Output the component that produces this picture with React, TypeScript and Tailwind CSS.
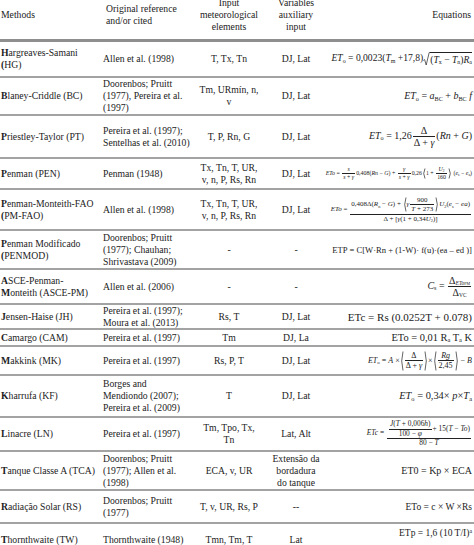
import React from "react";

type N = React.ReactNode;

const I = ({ children }: { children: N }) => <i className="italic">{children}</i>;
const Sb = ({ children }: { children: N }) => <sub className="text-[0.62em]">{children}</sub>;
const Sp = ({ children }: { children: N }) => <sup className="text-[0.62em]">{children}</sup>;

const Frac = ({ n, d }: { n: N; d: N }) => (
  <span className="mx-[1px] inline-flex flex-col items-center align-middle leading-[1.15]">
    <span className="px-[1px]">{n}</span>
    <span className="self-stretch border-t border-[#222] px-[1px] text-center">{d}</span>
  </span>
);

const Paren = ({ right, h }: { right?: boolean; h: number }) => (
  <svg width="4" height={h} viewBox={`0 0 4 ${h}`} className="inline-block align-middle">
    <path
      d={right ? `M1 0.5 Q3.6 ${h / 2} 1 ${h - 0.5}` : `M3 0.5 Q0.4 ${h / 2} 3 ${h - 0.5}`}
      stroke="#222"
      strokeWidth="0.7"
      fill="none"
    />
  </svg>
);

const Sqrt = ({ children }: { children: N }) => (
  <span className="inline-flex items-stretch align-middle">
    <svg width="7" height="14" viewBox="0 0 7 14" className="block">
      <path d="M0.3 8.5 L1.6 7.6 L3.2 13 L6.2 0.5 L7 0.5" stroke="#222" strokeWidth="0.7" fill="none" />
    </svg>
    <span className="border-t border-[#222] leading-[13px]">{children}</span>
  </span>
);

const EqHG = () => (
  <span className="text-[9.6px]">
    <I>ET</I>
    <Sb>o</Sb> = 0,0023(<I>T</I>
    <Sb>m</Sb> +17,8)
    <Sqrt>
      (<I>T</I>
      <Sb>x</Sb> − <I>T</I>
      <Sb>n</Sb>)<I>R</I>
      <Sb>a</Sb>
    </Sqrt>
  </span>
);

const EqBC = () => (
  <span className="text-[10px]">
    <I>ET</I>
    <Sb>o</Sb> = <I>a</I>
    <Sb>BC</Sb> + <I>b</I>
    <Sb>BC</Sb> <I>f</I>
  </span>
);

const EqPT = () => (
  <span className="text-[10px]">
    <I>ET</I>
    <Sb>o</Sb> = 1,26
    <Frac
      n="Δ"
      d={
        <>
          Δ + <I>γ</I>
        </>
      }
    />
    (<I>Rn</I> + <I>G</I>)
  </span>
);

const EqPEN = () => (
  <span className="text-[5.9px]">
    <I>ETo</I> ={" "}
    <Frac
      n={<I>s</I>}
      d={
        <>
          <I>s</I> + <I>γ</I>
        </>
      }
    />
    0,408(<I>Rn</I> − <I>G</I>) +{" "}
    <Frac
      n={<I>γ</I>}
      d={
        <>
          <I>s</I> + <I>γ</I>
        </>
      }
    />
    0,26
    <Paren h={11} />1 +{" "}
    <Frac
      n={
        <>
          <I>U</I>
          <Sb>2</Sb>
        </>
      }
      d="160"
    />
    <Paren right h={11} /> (<I>e</I>
    <Sb>s</Sb> − <I>e</I>
    <Sb>a</Sb>)
  </span>
);

const EqPM = () => (
  <span className="text-[7px]">
    <I>ETo</I> ={" "}
    <Frac
      n={
        <>
          0,408Δ(<I>R</I>
          <Sb>n</Sb> − <I>G</I>) +{" "}
          <Paren h={15} />
          <I>γ</I>
          <Frac
            n="900"
            d={
              <>
                <I>T</I> + 273
              </>
            }
          />
          <Paren right h={15} />
          <I>U</I>
          <Sb>2</Sb>(<I>e</I>
          <Sb>s</Sb> − <I>ea</I>)
        </>
      }
      d={
        <>
          Δ + [<I>γ</I>(1 + 0,34<I>U</I>
          <Sb>2</Sb>)]
        </>
      }
    />
  </span>
);

const EqPENMOD = () => <span className="text-[8.6px]">ETP = C[W·Rn + (1-W)· f(u)·(ea – ed )]</span>;

const EqASCE = () => (
  <span className="text-[10px]">
    <I>C</I>
    <Sb>s</Sb> ={" "}
    <Frac
      n={
        <>
          Δ
          <sub className="text-[5.5px]">
            <I>ETo</I>
            <span className="text-[4px]">PM</span>
          </sub>
        </>
      }
      d={
        <>
          Δ<sub className="text-[5.5px]">VC</sub>
        </>
      }
    />
  </span>
);

const EqJH = () => <span className="text-[11px]">ETc = Rs (0.0252T + 0.078)</span>;

const EqCAM = () => (
  <span className="text-[10.4px]">
    ETo = 0,01 R<Sb>a</Sb> T<Sb>a</Sb> K
  </span>
);

const EqMK = () => (
  <span className="text-[8px]">
    <I>ET</I>
    <Sb>o</Sb> = <I>A</I> ×<Paren h={20} />
    <Frac
      n="Δ"
      d={
        <>
          Δ + <I>γ</I>
        </>
      }
    />
    <Paren right h={20} />×<Paren h={20} />
    <Frac n={<I>Rg</I>} d="2,45" />
    <Paren right h={20} /> − <I>B</I>
  </span>
);

const EqKF = () => (
  <span className="text-[10.4px]">
    <I>ET</I>
    <Sb>o</Sb> = 0,34× <I>p</I>×<I>T</I>
    <Sb>a</Sb>
  </span>
);

const EqLN = () => (
  <span className="text-[7.4px]">
    <I>ETc</I> ={" "}
    <Frac
      n={
        <>
          <Frac
            n={
              <>
                <I>J</I>(<I>T</I> + 0,006<I>h</I>)
              </>
            }
            d={
              <>
                100 − <I>φ</I>
              </>
            }
          />
          + 15(<I>T</I> − <I>To</I>)
        </>
      }
      d={
        <>
          80 − <I>T</I>
        </>
      }
    />
  </span>
);

const EqTCA = () => <span className="text-[10px]">ET0 = Kp × ECA</span>;
const EqRS = () => <span className="text-[9.5px]">ETo = c × W ×Rs</span>;
const EqTW = () => (
  <span className="text-[9.5px]">
    ETp = 1,6 (10 T/I)<Sp>a</Sp>
  </span>
);

type RowT = {
  h: string;
  m: string[];
  r: string[];
  i: string[];
  v: string[];
  eq: N;
  top?: boolean;
};

const rows: RowT[] = [
  { h: "h-[36px]", m: ["Hargreaves-Samani", "(HG)"], r: ["Allen et al. (1998)"], i: ["T, Tx, Tn"], v: ["DJ, Lat"], eq: <EqHG /> },
  {
    h: "h-[38px]",
    m: ["Blaney-Criddle (BC)"],
    r: ["Doorenbos; Pruitt", "(1977), Pereira et al.", "(1997)"],
    i: ["Tm, URmín, n,", "v"],
    v: ["DJ, Lat"],
    eq: <EqBC />,
  },
  {
    h: "h-[43px]",
    m: ["Priestley-Taylor (PT)"],
    r: ["Pereira et al. (1997);", "Sentelhas et al. (2010)"],
    i: ["T, P, Rn, G"],
    v: ["DJ, Lat"],
    eq: <EqPT />,
  },
  {
    h: "h-[31px]",
    m: ["Penman (PEN)"],
    r: ["Penman (1948)"],
    i: ["Tx, Tn, T, UR,", "v, n, P, Rs, Rn"],
    v: ["DJ, Lat"],
    eq: <EqPEN />,
  },
  {
    h: "h-[41px]",
    m: ["Penman-Monteith-FAO", "(PM-FAO)"],
    r: ["Allen et al. (1998)"],
    i: ["Tx, Tn, T, UR,", "v, n, P, Rs, Rn"],
    v: ["DJ, Lat"],
    eq: <EqPM />,
  },
  {
    h: "h-[39px]",
    m: ["Penman Modificado", "(PENMOD)"],
    r: ["Doorenbos; Pruitt", "(1977); Chauhan;", "Shrivastava (2009)"],
    i: ["-"],
    v: ["-"],
    eq: <EqPENMOD />,
  },
  {
    h: "h-[35px]",
    m: ["ASCE-Penman-", "Monteith (ASCE-PM)"],
    r: ["Allen et al. (2006)"],
    i: ["-"],
    v: ["-"],
    eq: <EqASCE />,
  },
  {
    h: "h-[25px]",
    m: ["Jensen-Haise (JH)"],
    r: ["Pereira et al. (1997);", "Moura et al. (2013)"],
    i: ["Rs, T"],
    v: ["DJ, Lat"],
    eq: <EqJH />,
  },
  { h: "h-[17px]", m: ["Camargo (CAM)"], r: ["Pereira et al. (1997)"], i: ["Tm"], v: ["DJ, La"], eq: <EqCAM /> },
  { h: "h-[29px]", m: ["Makkink (MK)"], r: ["Pereira et al. (1997)"], i: ["Rs, P, T"], v: ["DJ, Lat"], eq: <EqMK /> },
  {
    h: "h-[42px]",
    m: ["Kharrufa (KF)"],
    r: ["Borges and", "Mendiondo (2007);", "Pereira et al. (2009)"],
    i: ["T"],
    v: ["DJ, Lat"],
    eq: <EqKF />,
  },
  {
    h: "h-[34px]",
    m: ["Linacre (LN)"],
    r: ["Pereira et al. (1997)"],
    i: ["Tm, Tpo, Tx,", "Tn"],
    v: ["Lat, Alt"],
    eq: <EqLN />,
  },
  {
    h: "h-[39px]",
    m: ["Tanque Classe A (TCA)"],
    r: ["Doorenbos; Pruitt", "(1977); Allen et al.", "(1998)"],
    i: ["ECA, v, UR"],
    v: ["Extensão da", "bordadura", "do tanque"],
    eq: <EqTCA />,
  },
  {
    h: "h-[33px]",
    m: ["Radiação Solar (RS)"],
    r: ["Doorenbos; Pruitt", "(1977)"],
    i: ["T, v, UR, Rs, P"],
    v: ["--"],
    eq: <EqRS />,
  },
  {
    h: "h-[34px]",
    m: ["Thornthwaite (TW)"],
    r: ["Thornthwaite (1948)"],
    i: ["Tmn, Tm, T"],
    v: ["Lat"],
    eq: <EqTW />,
    top: true,
  },
];

const Lines = ({ l, bold }: { l: string[]; bold?: boolean }) => (
  <>
    {l.map((s, k) => (
      <div key={k}>
        {bold ? (
          <>
            <span className="font-bold">{s[0]}</span>
            {s.slice(1)}
          </>
        ) : (
          s
        )}
      </div>
    ))}
  </>
);

function Row({ row }: { row: RowT }) {
  return (
    <div className={`flex ${row.h} items-center border-b-2 border-[#a3a3a3]`}>
      <div className="w-[103px] shrink-0 whitespace-nowrap pl-[1px]">
        <Lines l={row.m} bold />
      </div>
      <div className="w-[94px] shrink-0 whitespace-nowrap">
        <Lines l={row.r} />
      </div>
      <div className="w-[64px] shrink-0 whitespace-nowrap text-center">
        <Lines l={row.i} />
      </div>
      <div className="w-[70px] shrink-0 whitespace-nowrap text-center">
        <Lines l={row.v} />
      </div>
      <div
        className={
          row.top
            ? "flex min-w-0 flex-1 justify-end self-start whitespace-nowrap pr-[2px] pt-[3px]"
            : "flex min-w-0 flex-1 justify-end whitespace-nowrap pr-[2px]"
        }
      >
        {row.eq}
      </div>
    </div>
  );
}

export default function App() {
  return (
    <div className="h-[545px] w-[474px] overflow-hidden bg-white font-['Liberation_Serif',serif] text-[9.7px] leading-[12px] text-[#222]">
      <div className="-mt-[4px]">
        <div className="flex h-[46px] items-center border-b-[3px] border-[#8e8e8e] pb-[5px]">
          <div className="w-[103px] shrink-0 whitespace-nowrap pl-[1px]">Methods</div>
          <div className="w-[94px] shrink-0 whitespace-nowrap pl-[3px]">
            <div>Original reference</div>
            <div>and/or cited</div>
          </div>
          <div className="w-[64px] shrink-0 whitespace-nowrap text-center">
            <div>Input</div>
            <div>meteorological</div>
            <div>elements</div>
          </div>
          <div className="w-[70px] shrink-0 whitespace-nowrap text-center">
            <div>Variables</div>
            <div>auxiliary</div>
            <div>input</div>
          </div>
          <div className="flex min-w-0 flex-1 justify-end whitespace-nowrap pr-[3px]">Equations</div>
        </div>
        {rows.map((r, k) => (
          <Row key={k} row={r} />
        ))}
      </div>
    </div>
  );
}
